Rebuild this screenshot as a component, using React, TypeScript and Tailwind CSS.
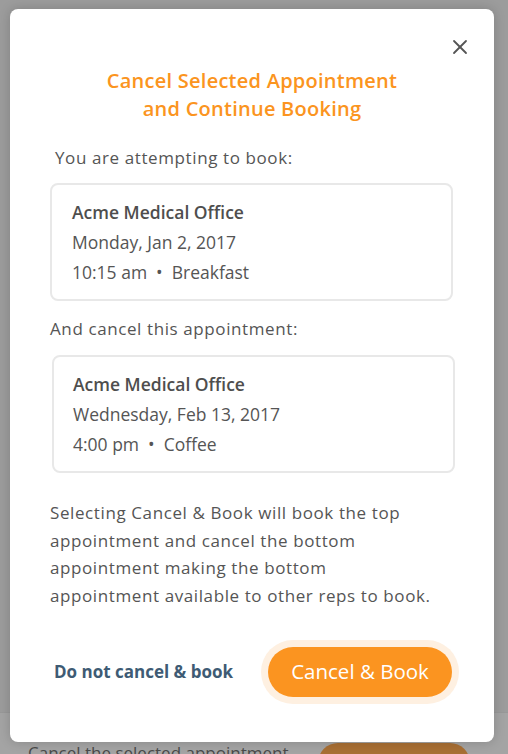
import { X } from 'lucide-react';

type Appt = { office: string; date: string; time: string; kind: string };

const toBook: Appt = { office: 'Acme Medical Office', date: 'Monday, Jan 2, 2017', time: '10:15 am', kind: 'Breakfast' };
const toCancel: Appt = { office: 'Acme Medical Office', date: 'Wednesday, Feb 13, 2017', time: '4:00 pm', kind: 'Coffee' };

function ApptCard({ appt, className }: { appt: Appt; className: string }) {
  return (
    <div className={`rounded-lg border-2 border-[#e8e8e8] pt-[12px] pb-[12px] text-[17.5px] leading-[30px] ${className}`}>
      <div className="font-semibold text-[#4e4e4e]">{appt.office}</div>
      <div className="text-[#555]">{appt.date}</div>
      <div className="text-[#555]">
        {appt.time}
        <span className="mx-[9px]">•</span>
        {appt.kind}
      </div>
    </div>
  );
}

export default function App() {
  return (
    <div className="relative h-[754px] w-[508px] overflow-hidden bg-[#9c9c9c]" style={{ fontFamily: '"Open Sans", Lato, sans-serif' }}>
      {/* page behind the overlay */}
      <div className="flex h-full flex-col">
        <div className="flex-1" />
        <div className="flex h-[42px] items-start justify-between border-t border-[#989898] bg-[#a4a4a4] pl-[28px] pr-[38px] pt-[30px]">
          <span className="text-[17px] leading-[20px] text-[#4a4a4a]">Cancel the selected appointment</span>
          <div className="h-[40px] w-[152px] rounded-full bg-[#a86f34]" />
        </div>
      </div>

      {/* modal */}
      <div className="absolute left-[10px] top-[9px] h-[733px] w-[484px] rounded-lg bg-white shadow-[0_0_12px_rgba(0,0,0,0.18)]">
        <button className="absolute right-[22px] top-[26px] text-[#555]">
          <X size={24} strokeWidth={1.8} />
        </button>

        <div className="px-[20px] pt-[58px]">
          <h2 className="text-center text-[20px] font-semibold leading-[28px] tracking-[0.25px] text-[#fb9420]">
            Cancel Selected Appointment
            <br />
            and Continue Booking
          </h2>
        </div>

        <div className="pl-[40px] pr-[41px] pt-[20px]">
          <p className="pl-[5px] text-[17px] leading-[30px] tracking-[0.6px] text-[#555]">You are attempting to book:</p>
          <ApptCard appt={toBook} className="mt-[10px] pl-[20px]" />

          <p className="mt-[13px] text-[17px] leading-[30px] tracking-[0.6px] text-[#555]">And cancel this appointment:</p>
          <ApptCard appt={toCancel} className="ml-[2px] mr-[-2px] mt-[11px] pl-[19px]" />

          <p className="mt-[26px] whitespace-nowrap text-[17px] leading-[27.7px] tracking-[0.6px] text-[#555]">
            Selecting Cancel &amp; Book will book the top
            <br />
            appointment and cancel the bottom
            <br />
            appointment making the bottom
            <br />
            appointment available to other reps to book.
          </p>

          <div className="mt-[30px] flex items-center justify-between pl-[4px]">
            <button className="text-[17px] font-bold text-[#3e5b74]">Do not cancel &amp; book</button>
            <div className="mr-[-6px] rounded-full bg-[#fef0e1] p-[7px]">
              <button className="h-[50px] w-[184px] rounded-full bg-[#fb9420] text-[20.5px] font-medium text-white">
                Cancel &amp; Book
              </button>
            </div>
          </div>
        </div>
      </div>
    </div>
  );
}
